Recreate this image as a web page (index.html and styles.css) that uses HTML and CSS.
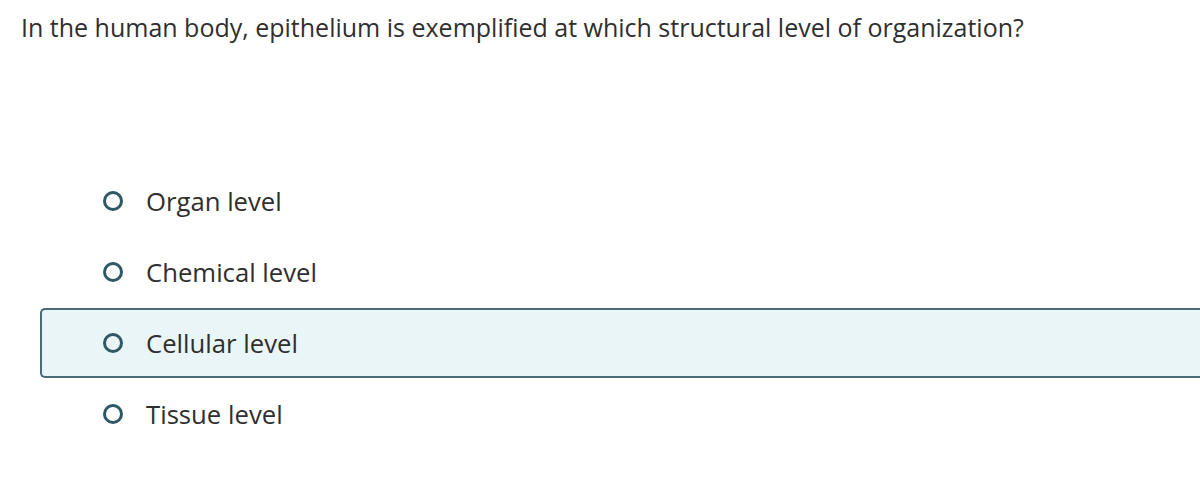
FILE: index.html
```html
<!DOCTYPE html>
<html lang="en">
<head>
    <meta charset="UTF-8">
    <title>Question</title>
    <link rel="stylesheet" href="styles.css">
</head>
<body>
    <div class="question">
        <p class="prompt">In the human body, epithelium is exemplified at which structural level of organization?</p>
        <ul class="choices" role="radiogroup">
            <li class="choice" role="radio" aria-checked="false">
                <span class="radio"></span>
                <span class="choice-text">Organ level</span>
            </li>
            <li class="choice" role="radio" aria-checked="false">
                <span class="radio"></span>
                <span class="choice-text">Chemical level</span>
            </li>
            <li class="choice hover" role="radio" aria-checked="false">
                <span class="radio"></span>
                <span class="choice-text">Cellular level</span>
            </li>
            <li class="choice" role="radio" aria-checked="false">
                <span class="radio"></span>
                <span class="choice-text">Tissue level</span>
            </li>
        </ul>
    </div>
</body>
</html>
```

FILE: styles.css
```css
body {
    margin: 0;
    background: #fff;
    font-family: "Open Sans", "Lato", sans-serif;
    color: #2f2f2f;
}

/* Question text */
.prompt {
    margin: 0;
    padding: 12px 0 0 21px;
    height: 166px;
    box-sizing: border-box;
    font-size: 25px;
    line-height: 30px;
}

/* List of answer choices */
.choices {
    list-style: none;
    margin: 0 0 0 40px;
    padding: 0;
    display: flex;
    flex-direction: column;
    gap: 1px;
}

.choice {
    display: flex;
    align-items: center;
    height: 70px;
    padding-left: 61px;
    box-sizing: border-box;
    border: 2px solid transparent;
    border-right: none;
    border-radius: 5px 0 0 5px;
    font-size: 25.7px;
}

/* Highlighted row */
.choice.hover {
    background: #eaf5f7;
    border-color: #4d6b74;
}

.radio {
    width: 20px;
    height: 20px;
    box-sizing: border-box;
    border: 3px solid #2e5866;
    border-radius: 50%;
    margin-right: 23px;
    flex-shrink: 0;
}
```
